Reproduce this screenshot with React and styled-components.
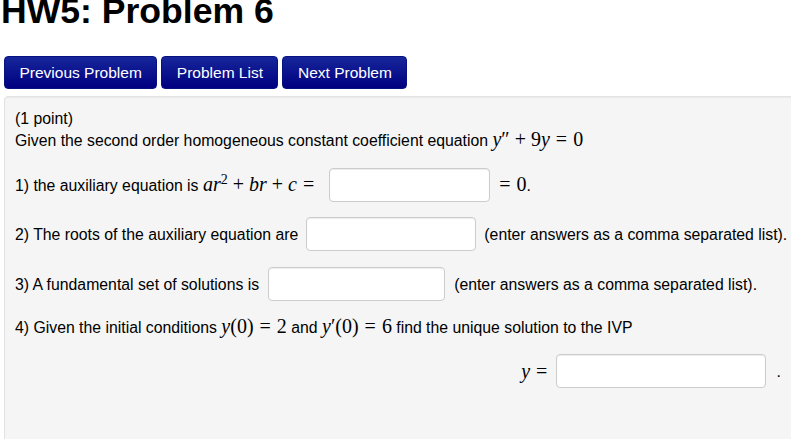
import styled, { createGlobalStyle } from 'styled-components';

const GlobalStyle = createGlobalStyle`
	html, body {
		margin: 0;
		padding: 0;
		overflow: hidden;
		background: #fff;
	}
	body {
		font-family: "Liberation Sans", Arial, sans-serif;
		font-size: 15.8px;
		color: #000;
	}
`;

const Page = styled.div`
	width: 1300px;
	padding-left: 4px;
	box-sizing: border-box;
`;

const Title = styled.h1`
	margin: -6px 0 0 -3px;
	font-size: 35.6px;
	line-height: 35px;
	font-weight: bold;
`;

const Nav = styled.div`
	display: flex;
	gap: 4px;
	margin-top: 27px;
`;

const NavButton = styled.button`
	height: 33px;
	padding: 0 14.5px;
	border: 1px solid #06127f;
	border-radius: 4px;
	background: linear-gradient(to bottom, #16269a 0%, #000080 100%);
	color: #fff;
	font-family: "Liberation Sans", Arial, sans-serif;
	font-size: 15.5px;
	cursor: pointer;
`;

const Panel = styled.div`
	margin-top: 7px;
	min-height: 400px;
	padding: 11px 12px 12px 10px;
	background: #f5f5f5;
	border: 1px solid #e3e3e3;
	border-radius: 4px;
	box-shadow: inset 0 1px 1px rgba(0, 0, 0, 0.05);
`;

const Intro = styled.div`
	line-height: 21px;
`;

const Row = styled.div`
	display: flex;
	align-items: center;
	justify-content: ${(p) => (p.$center ? 'center' : 'flex-start')};
	gap: ${(p) => p.$gap || 9}px;
	min-height: ${(p) => (p.$plain ? '21px' : '34px')};
	margin-top: ${(p) => p.$top || 16}px;
	line-height: 21px;
`;

const AnswerBox = styled.input`
	width: ${(p) => p.$w}px;
	height: 34px;
	box-sizing: border-box;
	padding: 6px 8px;
	border: 1px solid #cccccc;
	border-radius: 4px;
	background: #fff;
	box-shadow: inset 0 1px 1px rgba(0, 0, 0, 0.075);
	font: inherit;
	outline: none;
`;

const Math = styled.span`
	font-family: "Liberation Serif", "Times New Roman", serif;
	font-size: 20px;
	line-height: 1;
	white-space: nowrap;
`;

const V = styled.i`
	font-style: italic;
`;

const Op = styled.span`
	margin: 0 ${(p) => (p.$rel ? '0.3em' : '0.25em')};
`;

const Sup = styled.sup`
	font-size: 14px;
	line-height: 0;
	vertical-align: 0.5em;
`;

const Dot = styled.span`
	margin-left: 1px;
`;

export default function App() {
	return (
		<Page>
			<GlobalStyle />
			<Title>HW5: Problem 6</Title>
			<Nav>
				<NavButton>Previous Problem</NavButton>
				<NavButton>Problem List</NavButton>
				<NavButton>Next Problem</NavButton>
			</Nav>
			<Panel>
				<Intro>
					(1 point)
					<br />
					Given the second order homogeneous constant coefficient equation{' '}
					<Math>
						<V>y</V>″<Op>+</Op>9<V>y</V><Op $rel>=</Op>0
					</Math>
				</Intro>

				<Row $top={17}>
					<span>
						1) the auxiliary equation is{' '}
						<Math>
							<V>a</V><V>r</V><Sup>2</Sup><Op>+</Op><V>b</V><V>r</V><Op>+</Op><V>c</V><Op $rel>=</Op>
						</Math>
					</span>
					<AnswerBox $w={161} />
					<span>
						<Math><Op $rel style={{ marginLeft: 0 }}>=</Op>0</Math>.
					</span>
				</Row>

				<Row $top={15} $gap={8}>
					<span>2) The roots of the auxiliary equation are</span>
					<AnswerBox $w={170} />
					<span>(enter answers as a comma separated list).</span>
				</Row>

				<Row>
					<span>3) A fundamental set of solutions is</span>
					<AnswerBox $w={177} />
					<span>(enter answers as a comma separated list).</span>
				</Row>

				<Row $plain $top={15}>
					<span>
						4) Given the initial conditions{' '}
						<Math>
							<V>y</V>(0)<Op $rel>=</Op>2
						</Math>{' '}
						and{' '}
						<Math>
							<V>y</V>′(0)<Op $rel>=</Op>6
						</Math>{' '}
						find the unique solution to the IVP
					</span>
				</Row>

				<Row $center $top={16}>
					<Math>
						<V>y</V><Op $rel style={{ marginRight: 0 }}>=</Op>
					</Math>
					<AnswerBox $w={210} />
					<Dot>.</Dot>
				</Row>
			</Panel>
		</Page>
	);
}
